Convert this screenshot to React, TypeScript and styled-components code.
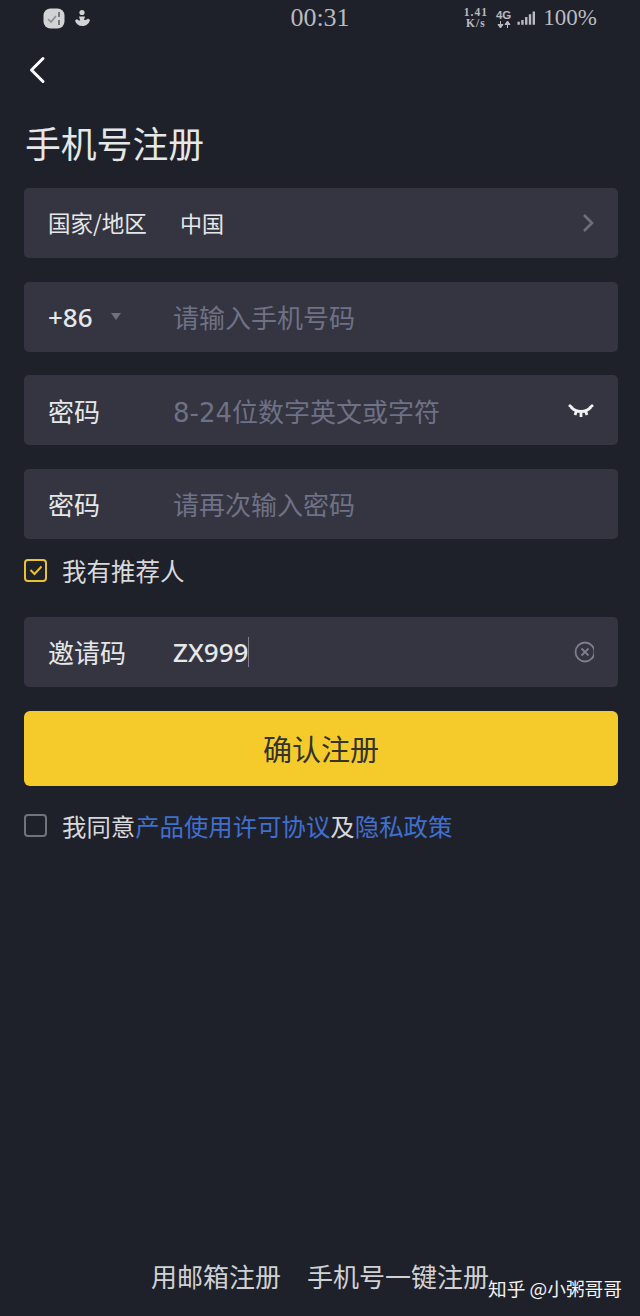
import React from "react";
import styled, { createGlobalStyle } from "styled-components";

const GlobalStyle = createGlobalStyle`
  html, body {
    margin: 0;
    padding: 0;
    background: #1f212a;
  }
  body {
    font-family: "Noto Sans CJK SC", "Noto Sans", sans-serif;
  }
`;

export default function App() {
  return (
    <Page>
      <GlobalStyle />
      <StatusBar>
        <StatusLeft>
          <AppBadge>
            <svg width="22" height="21" viewBox="0 0 22 21">
              <rect x="0.5" y="0.5" width="21" height="20" rx="7" fill="#d2d3d5" />
              <path d="M5 11l3 3 5-6" fill="none" stroke="#8b8d92" strokeWidth="1.6" />
              <path d="M16 4v5M16 12v5" fill="none" stroke="#77797e" strokeWidth="2" />
            </svg>
          </AppBadge>
          <svg width="18" height="19" viewBox="0 0 18 19">
            <circle cx="8" cy="3.5" r="2.6" fill="#d2d3d5" />
            <path
              d="M5 7.5h6l-1 3.5c1.600 0 3-.5 4-1.500l2 1.500c-1 3.500-3.500 6-7.500 6S2 15 1 11.500l2-1.500c.7 1 1.800 1.500 3.200 1.500z"
              fill="#d2d3d5"
            />
          </svg>
        </StatusLeft>
        <Clock>00:31</Clock>
        <StatusRight>
          <NetSpeed>
            <span>1.41</span>
            <span>K/s</span>
          </NetSpeed>
          <NetType>
            <span>4G</span>
            <svg width="14" height="7" viewBox="0 0 14 7">
              <path
                d="M3.500 0v4M1 3.500L3.500 7 6 3.500zM10.500 7V3M8 3.500L10.500 0 13 3.500z"
                fill="#b9bbc0"
                stroke="#b9bbc0"
              />
            </svg>
          </NetType>
          <svg width="18" height="15" viewBox="0 0 19 15">
            <path
              d="M0.500 11h2.500v3H0.500zM4.500 9H7v5H4.500zM8.500 6H11v8H8.500zM12.500 3H15v11h-2.500zM16.500 0H19v14h-2.500z"
              fill="#b9bbc0"
            />
          </svg>
          <Battery>100%</Battery>
        </StatusRight>
      </StatusBar>

      <BackRow>
        <svg width="18" height="28" viewBox="0 0 18 28">
          <path
            d="M15 2.500L3.500 14 15 25.500"
            fill="none"
            stroke="#ffffff"
            strokeWidth="3"
            strokeLinecap="round"
            strokeLinejoin="round"
          />
        </svg>
      </BackRow>

      <Title>手机号注册</Title>

      <Form>
        <FieldGroup>
          <Field>
            <RegionLabel>国家/地区</RegionLabel>
            <RegionValue>中国</RegionValue>
            <TrailingIcon>
              <svg width="12" height="20" viewBox="0 0 12 20">
                <path
                  d="M2 2l8 8-8 8"
                  fill="none"
                  stroke="#6c6e80"
                  strokeWidth="2.600"
                />
              </svg>
            </TrailingIcon>
          </Field>
          <Field>
            <CodeLabel>
              +86
              <Caret />
            </CodeLabel>
            <Placeholder>请输入手机号码</Placeholder>
          </Field>
          <Field>
            <Label>密码</Label>
            <Placeholder>
              <Digits>8-24</Digits>位数字英文或字符
            </Placeholder>
            <TrailingIcon>
              <svg width="26" height="18" viewBox="0 -2 26 18">
                <path
                  d="M3 4c5 6 15 6 20 0M1 2l3.500 3M25 2l-3.500 3M8.500 8l-1.500 4M17.500 8l1.500 4M13 9.500V14"
                  fill="none"
                  stroke="#f2f2f4"
                  strokeWidth="2.800"
                />
              </svg>
            </TrailingIcon>
          </Field>
          <Field>
            <Label>密码</Label>
            <Placeholder>请再次输入密码</Placeholder>
          </Field>
        </FieldGroup>

        <CheckRow>
          <CheckBox $checked>
            <svg width="14" height="11" viewBox="0 0 14 11">
              <path d="M1.500 5l4 4 7-7.500" fill="none" stroke="#e8c22f" strokeWidth="2" />
            </svg>
          </CheckBox>
          我有推荐人
        </CheckRow>

        <Field>
          <Label>邀请码</Label>
          <Value>ZX999</Value>
          <Cursor />
          <TrailingIcon>
            <svg width="24" height="22" viewBox="0 0 24 22">
              <circle cx="15" cy="11" r="9.500" fill="none" stroke="#7d7f8e" strokeWidth="1.800" />
              <path d="M11.500 7.500l7 7M18.500 7.500l-7 7" fill="none" stroke="#7d7f8e" strokeWidth="1.800" />
            </svg>
          </TrailingIcon>
        </Field>

        <SubmitButton type="button">确认注册</SubmitButton>

        <AgreeRow>
          <CheckBox />
          我同意<AgreeLink>产品使用许可协议</AgreeLink>及<AgreeLink>隐私政策</AgreeLink>
        </AgreeRow>
      </Form>

      <Footer>
        <FooterLink>用邮箱注册</FooterLink>
        <FooterLink>手机号一键注册</FooterLink>
      </Footer>
      <Watermark>知乎 @小粥哥哥</Watermark>
    </Page>
  );
}

const Page = styled.div`
  position: relative;
  box-sizing: border-box;
  display: flex;
  flex-direction: column;
  width: 640px;
  height: 1316px;
  overflow: hidden;
  background: #1f212a;
`;

const StatusBar = styled.div`
  box-sizing: border-box;
  display: flex;
  align-items: center;
  justify-content: space-between;
  height: 36px;
  padding: 0 43px;
  color: #b9bbc0;
  font-family: "Liberation Serif", serif;
`;

const StatusLeft = styled.div`
  display: flex;
  align-items: center;
  gap: 9px;
  width: 200px;
`;

const AppBadge = styled.div`
  display: flex;
`;

const Clock = styled.div`
  font-size: 26px;
  line-height: 36px;
`;

const StatusRight = styled.div`
  display: flex;
  align-items: center;
  justify-content: flex-end;
  width: 200px;
  gap: 8px;
`;

const NetSpeed = styled.div`
  display: flex;
  flex-direction: column;
  align-items: center;
  font-size: 11.500px;
  font-weight: 700;
  letter-spacing: 1px;
  line-height: 11.500px;
`;

const NetType = styled.div`
  display: flex;
  flex-direction: column;
  align-items: center;
  margin-right: -2px;
  font-family: "Liberation Sans", sans-serif;
  font-size: 11.500px;
  font-weight: 700;
  line-height: 12px;
`;

const Battery = styled.div`
  font-size: 23px;
`;

const BackRow = styled.div`
  display: flex;
  align-items: center;
  height: 28px;
  margin-top: 20px;
  padding-left: 28px;
`;

const Title = styled.h1`
  margin: 33px 0 0 25px;
  color: #e6e7e8;
  font-size: 35.800px;
  font-weight: 400;
  line-height: 50px;
`;

const Form = styled.div`
  display: flex;
  flex-direction: column;
  margin-top: 21px;
  padding: 0 22px 0 24px;
`;

const FieldGroup = styled.div`
  display: flex;
  flex-direction: column;
  gap: 23.500px;
`;

const Field = styled.div`
  box-sizing: border-box;
  display: flex;
  align-items: center;
  height: 70px;
  padding: 0 24px;
  border-radius: 5px;
  background: #343540;
  color: #e6e7e8;
  font-size: 26px;
`;

const Label = styled.span`
  width: 125px;
  flex-shrink: 0;
  color: #e6e7e8;
`;

const RegionLabel = styled.span`
  width: 132px;
  flex-shrink: 0;
  padding-bottom: 3px;
  font-size: 22.500px;
`;

const RegionValue = styled.span`
  padding-bottom: 3px;
  font-size: 22px;
  color: #e6e7e8;
`;

const CodeLabel = styled.span`
  display: flex;
  align-items: center;
  width: 125px;
  flex-shrink: 0;
  font-family: "Noto Sans", sans-serif;
  font-weight: 500;
`;

const Caret = styled.i`
  width: 0;
  height: 0;
  margin-left: 18px;
  border-left: 5px solid transparent;
  border-right: 5px solid transparent;
  border-top: 7px solid #6f7183;
`;

const Placeholder = styled.span`
  color: #6f7186;
`;

const Digits = styled.span`
  font-family: "DejaVu Sans", sans-serif;
`;

const Value = styled.span`
  color: #e6e7e8;
  font-family: "Noto Sans", sans-serif;
  font-weight: 500;
`;

const Cursor = styled.i`
  width: 1px;
  height: 30px;
  background: #7d7f8e;
`;

const TrailingIcon = styled.span`
  display: flex;
  margin-left: auto;
`;

const CheckRow = styled.div`
  display: flex;
  align-items: center;
  height: 40px;
  margin: 12px 0 26px;
  gap: 15px;
  color: #d8d9dc;
  font-size: 24.500px;
`;

const CheckBox = styled.span<{ $checked?: boolean }>`
  box-sizing: border-box;
  display: flex;
  align-items: center;
  justify-content: center;
  width: 23px;
  height: 23px;
  border: 2.500px solid ${(p) => (p.$checked ? "#e8c22f" : "#70727f")};
  border-radius: 4px;
`;

const SubmitButton = styled.button`
  display: block;
  height: 75px;
  margin-top: 24px;
  border: 0;
  border-radius: 6px;
  background: #f5cb2c;
  color: #35332a;
  font-family: inherit;
  font-size: 29px;
`;

const AgreeRow = styled.div`
  display: flex;
  align-items: center;
  height: 40px;
  margin-top: 20px;
  color: #d8d9dc;
  font-size: 24.400px;
  white-space: nowrap;
  & > span:first-child {
    margin-right: 15px;
  }
`;

const AgreeLink = styled.span`
  color: #3f70cf;
`;

const Footer = styled.div`
  display: flex;
  justify-content: center;
  gap: 26px;
  margin-top: auto;
  padding-bottom: 20px;
`;

const FooterLink = styled.span`
  color: #d0d1d4;
  font-size: 26px;
  line-height: 40px;
`;

const Watermark = styled.div`
  position: absolute;
  right: 18px;
  bottom: 14px;
  color: #f2f2f2;
  font-size: 18.700px;
  line-height: 28px;
  white-space: nowrap;
`;
